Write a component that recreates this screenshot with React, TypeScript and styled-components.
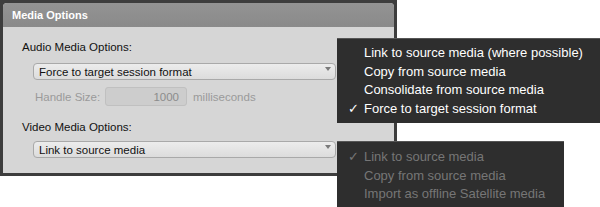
import React from "react";
import styled, { createGlobalStyle } from "styled-components";

const GlobalStyle = createGlobalStyle`
  html, body {
    margin: 0;
    padding: 0;
    background: #fff;
  }
  body {
    font-family: "Liberation Sans", Arial, sans-serif;
    width: 600px;
    height: 207px;
    overflow: hidden;
  }
`;

const Stage = styled.div`
  position: relative;
  width: 600px;
  height: 207px;
  overflow: hidden;
`;

const Frame = styled.div`
  width: 391px;
  height: 170px;
  padding: 3px;
  background: #3d3d3d;
`;

const Panel = styled.div`
  height: 100%;
  display: flex;
  flex-direction: column;
  border-radius: 4px 4px 0 0;
  overflow: hidden;
  background: #d6d6d6;
`;

const TitleBar = styled.div`
  height: 24px;
  display: flex;
  align-items: center;
  padding-left: 9px;
  background: linear-gradient(#939393, #8a8a8a);
  color: #fff;
  font-size: 11px;
  font-weight: bold;
`;

const Body = styled.div`
  display: flex;
  flex-direction: column;
  align-items: flex-start;
  padding: 13px 0 0 19px;
`;

const Label = styled.div<{ $gap: number }>`
  font-size: 11.5px;
  line-height: 14px;
  color: #111;
  margin-bottom: ${(p) => p.$gap}px;
`;

const Select = styled.div`
  position: relative;
  box-sizing: border-box;
  width: 303px;
  height: 17px;
  margin-left: 11px;
  padding-left: 5px;
  display: flex;
  align-items: center;
  font-size: 11.5px;
  color: #111;
  border: 1px solid #a9a9a9;
  border-radius: 4px;
  background: linear-gradient(#ececec, #dcdcdc);
`;

const Arrow = styled.span`
  position: absolute;
  top: 3px;
  right: 4px;
  width: 0;
  height: 0;
  border-left: 3.5px solid transparent;
  border-right: 3.5px solid transparent;
  border-top: 4px solid #7a7a7a;
`;

const HandleRow = styled.div`
  display: flex;
  align-items: center;
  height: 19px;
  margin: 7px 0 14px 13px;
  font-size: 11.5px;
  color: #9a9a9a;
`;

const HandleLabel = styled.span`
  width: 70px;
`;

const NumberBox = styled.div`
  box-sizing: border-box;
  width: 82px;
  height: 19px;
  padding-right: 7px;
  display: flex;
  align-items: center;
  justify-content: flex-end;
  border: 1px solid #c0c0c0;
  border-radius: 3px;
  background: #cdcdcd;
  color: #8c8c8c;
  margin-right: 6px;
`;

const Menu = styled.div<{ $top: number; $width: number; $padTop: number }>`
  position: absolute;
  left: 337px;
  top: ${(p) => p.$top}px;
  width: ${(p) => p.$width}px;
  padding: ${(p) => p.$padTop}px 0 5px;
  background: #2e2e2e;
  border-top: 1px solid #555;
  box-sizing: border-box;
  font-size: 13px;
`;

const Item = styled.div<{ $dim?: boolean }>`
  position: relative;
  height: 18.5px;
  line-height: 18.5px;
  padding-left: 27px;
  white-space: nowrap;
  color: ${(p) => (p.$dim ? "#767676" : "#fff")};
`;

const Check = styled.span`
  position: absolute;
  left: 11px;
  top: 0;
`;

type Opt = { label: string; checked?: boolean };

const audioOptions: Opt[] = [
  { label: "Link to source media (where possible)" },
  { label: "Copy from source media" },
  { label: "Consolidate from source media" },
  { label: "Force to target session format", checked: true },
];

const videoOptions: Opt[] = [
  { label: "Link to source media", checked: true },
  { label: "Copy from source media" },
  { label: "Import as offline Satellite media" },
];

export default function App() {
  return (
    <Stage>
      <GlobalStyle />
      <Frame>
        <Panel>
          <TitleBar>Media Options</TitleBar>
          <Body>
            <Label $gap={9}>Audio Media Options:</Label>
            <Select>
              Force to target session format
              <Arrow />
            </Select>
            <HandleRow>
              <HandleLabel>Handle Size:</HandleLabel>
              <NumberBox>1000</NumberBox>
              <span>milliseconds</span>
            </HandleRow>
            <Label $gap={7}>Video Media Options:</Label>
            <Select>
              Link to source media
              <Arrow />
            </Select>
          </Body>
        </Panel>
      </Frame>

      <Menu $top={38} $width={270} $padTop={5}>
        {audioOptions.map((o) => (
          <Item key={o.label}>
            {o.checked && <Check>✓</Check>}
            {o.label}
          </Item>
        ))}
      </Menu>

      <Menu $top={141} $width={227} $padTop={6}>
        {videoOptions.map((o) => (
          <Item key={o.label} $dim>
            {o.checked && <Check>✓</Check>}
            {o.label}
          </Item>
        ))}
      </Menu>
    </Stage>
  );
}
